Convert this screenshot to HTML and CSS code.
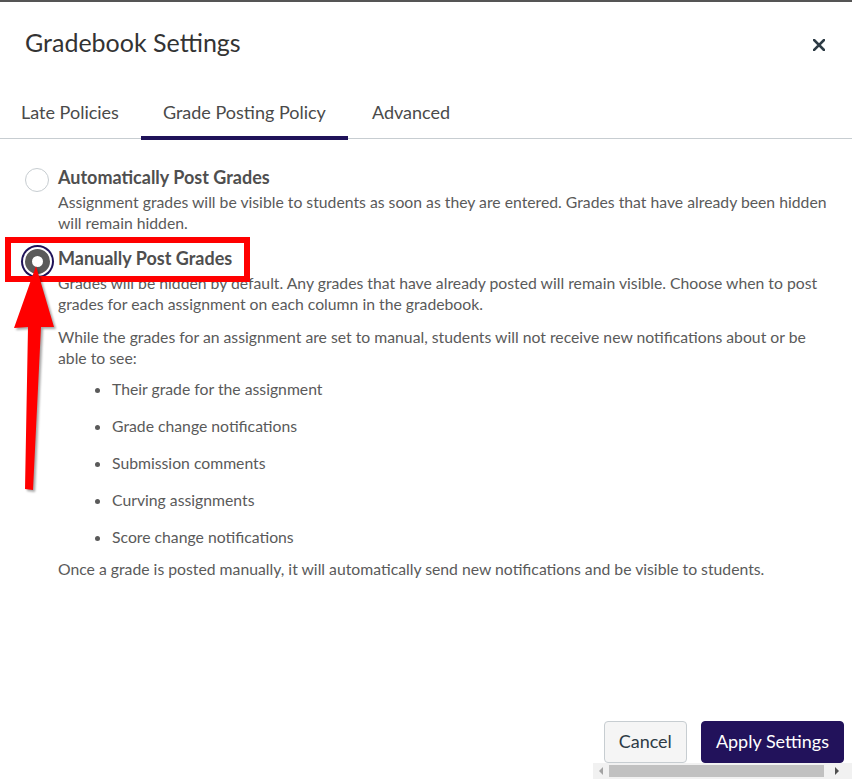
FILE: index.html
```html
<!DOCTYPE html>
<html lang="en">
<head>
    <meta charset="UTF-8">
    <meta name="viewport" content="width=device-width, initial-scale=1.0">
    <title>Gradebook Settings</title>
    <link rel="stylesheet" href="styles.css">
</head>
<body>

<div class="modal">
    <header class="modal-header">
        <h2 class="modal-title">Gradebook Settings</h2>
        <button type="button" class="close-btn" aria-label="Close">
            <svg width="12" height="12" viewBox="0 0 12 12">
                <path d="M1 1 L11 11 M11 1 L1 11" stroke="#2d3b45" stroke-width="2.6" stroke-linecap="square"/>
            </svg>
        </button>
    </header>

    <nav class="tabs">
        <span class="tab">Late Policies</span>
        <span class="tab active">Grade Posting Policy</span>
        <span class="tab">Advanced</span>
    </nav>

    <main class="content">
        <div class="option">
            <span class="radio"></span>
            <div class="option-text">
                <div class="option-label">Automatically Post Grades</div>
                <p class="option-desc">Assignment grades will be visible to students as soon as they are entered. Grades that have already been hidden will remain hidden.</p>
            </div>
        </div>

        <div class="option option-manual">
            <span class="radio checked"></span>
            <div class="option-text">
                <div class="option-label">Manually Post Grades</div>
                <p class="option-desc">Grades will be hidden by default. Any grades that have already posted will remain visible. Choose when to post grades for each assignment on each column in the gradebook.</p>
                <p class="option-desc spaced">While the grades for an assignment are set to manual, students will not receive new notifications about or be able to see:</p>
                <ul class="option-list">
                    <li>Their grade for the assignment</li>
                    <li>Grade change notifications</li>
                    <li>Submission comments</li>
                    <li>Curving assignments</li>
                    <li>Score change notifications</li>
                </ul>
                <p class="option-desc">Once a grade is posted manually, it will automatically send new notifications and be visible to students.</p>
            </div>
        </div>
    </main>

    <footer class="modal-footer">
        <div class="buttons">
            <button type="button" class="btn btn-cancel">Cancel</button>
            <button type="button" class="btn btn-primary">Apply Settings</button>
        </div>
        <div class="hscroll">
            <span class="arrow-left"></span>
            <span class="thumb"></span>
            <span class="arrow-right"></span>
        </div>
    </footer>
</div>

<!-- annotation drawn over the screenshot -->
<div class="callout-box"></div>
<svg class="callout-arrow" width="70" height="500" viewBox="0 0 70 500">
    <polygon points="36,266 54,327 41,327 33,490 25,489 28,327 14,328" fill="#ff0000"/>
</svg>

</body>
</html>
```

FILE: styles.css
```css
body {
    margin: 0;
    font-family: Lato, "Liberation Sans", sans-serif;
    color: #555;
    background: #fff;
}
.modal {
    height: 782px;
    box-sizing: border-box;
    border-top: 2px solid #555;
    display: flex;
    flex-direction: column;
}
.modal-header {
    height: 86px;
    box-sizing: border-box;
    padding: 25px 27px 0 25px;
    display: flex;
    justify-content: space-between;
    align-items: flex-start;
}
.modal-title {
    margin: 0;
    font-size: 25px;
    font-weight: 400;
    line-height: 30px;
    color: #333;
}
.close-btn {
    margin-top: 12px;
    padding: 0;
    border: none;
    background: none;
    width: 12px;
    height: 12px;
    display: block;
}
.close-btn svg {
    display: block;
}
.tabs {
    display: flex;
    border-bottom: 1px solid #c7cdd1;
    margin-left: -1px;
}
.tab {
    padding: 12px 22px;
    font-size: 18px;
    line-height: 24px;
    color: #4a4a4a;
    border-bottom: 4px solid transparent;
    margin-bottom: -2px;
}
.tab.active {
    border-bottom-color: #1f1259;
    margin-right: 2px;
}
.content {
    flex: 1;
    padding: 26px 20px 0 25px;
}
.option {
    display: flex;
    gap: 9px;
}
.option-manual {
    margin-top: 13px;
}
.radio {
    flex: none;
    width: 24px;
    height: 24px;
    margin-top: 3px;
    box-sizing: border-box;
    border: 1px solid #c7cdd1;
    border-radius: 50%;
    background: #fff;
}
.radio.checked {
    width: 25px;
    height: 25px;
    margin-right: -1px;
    border: 7px solid #5a5a5a;
    box-shadow: 0 0 0 2px #fff, 0 0 0 4px #1f1259;
}
.option-label {
    font-size: 18px;
    font-weight: 700;
    line-height: 24px;
    color: #4f4f4f;
}
.option-desc {
    margin: 2px 0 0;
    font-size: 15.75px;
    line-height: 21px;
    color: #5a5a5a;
}
.option-desc.spaced {
    margin-top: 12px;
}
.option-list {
    margin: 10px 0 11px;
    padding-left: 54px;
    font-size: 15.75px;
    line-height: 21px;
    color: #5a5a5a;
}
.option-list li {
    margin-bottom: 16px;
}
.option-list li:last-child {
    margin-bottom: 0;
}
.modal-footer {
    display: flex;
    flex-direction: column;
    align-items: flex-end;
    padding-bottom: 3px;
}
.buttons {
    display: flex;
    gap: 14px;
    padding-right: 8px;
}
.btn {
    height: 42px;
    padding: 0 14px 3px;
    font-family: Lato, "Liberation Sans", sans-serif;
    font-size: 18px;
    border-radius: 4px;
    border: 1px solid #c7cdd1;
}
.btn-cancel {
    background: #f5f5f5;
    color: #2d3b45;
}
.btn-primary {
    background: #22125b;
    border-color: #22125b;
    color: #fff;
}
.hscroll {
    width: 259px;
    height: 16px;
    background: #f1f1f1;
    display: flex;
    align-items: center;
}
.thumb {
    display: block;
    width: 215px;
    height: 12px;
    background: #c1c1c1;
    margin: 0 6px 0 6px;
}
.arrow-left {
    display: block;
    margin-left: 6px;
    border-top: 4px solid transparent;
    border-bottom: 4px solid transparent;
    border-right: 4px solid #a3a3a3;
}
.arrow-right {
    display: block;
    margin-left: 5px;
    border-top: 4px solid transparent;
    border-bottom: 4px solid transparent;
    border-left: 4px solid #505050;
}
.callout-box {
    position: absolute;
    left: 5px;
    top: 237px;
    width: 245px;
    height: 45px;
    box-sizing: border-box;
    border: 6px solid #ff0000;
}
.callout-arrow {
    position: absolute;
    left: 0;
    top: 0;
    filter: drop-shadow(2px 2px 1px rgba(0, 0, 0, 0.35));
    pointer-events: none;
}
```
